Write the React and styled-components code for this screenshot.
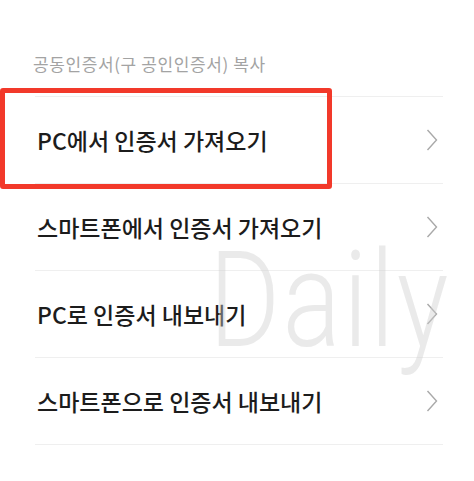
import React from 'react'
import styled, { createGlobalStyle } from 'styled-components'

const GlobalStyle = createGlobalStyle`
  body {
    margin: 0;
    background: #ffffff;
    font-family: "Noto Sans CJK KR", "Noto Sans", sans-serif;
  }
`

const items = [
  { label: 'PC에서 인증서 가져오기', marked: true },
  { label: '스마트폰에서 인증서 가져오기' },
  { label: 'PC로 인증서 내보내기' },
  { label: '스마트폰으로 인증서 내보내기' },
]

function Chevron() {
  return (
    <svg width="12" height="24" viewBox="0 0 12 24">
      <polyline points="1.5,2 10.5,12 1.5,22" fill="none" stroke="#a9a9a9" strokeWidth="1.4" />
    </svg>
  )
}

export default function App() {
  return (
    <Page>
      <GlobalStyle />
      <SectionTitle>공동인증서(구 공인인증서) 복사</SectionTitle>
      <List>
        {items.map((item) => (
          <Row key={item.label}>
            {item.marked && <Highlight />}
            <Label>{item.label}</Label>
            <Chevron />
          </Row>
        ))}
      </List>
      <Watermark>Daily</Watermark>
    </Page>
  )
}

const Page = styled.div`
  position: relative;
  width: 474px;
  height: 481px;
  padding: 52px 31px 0 33px;
  box-sizing: border-box;
  overflow: hidden;
`

const SectionTitle = styled.div`
  font-size: 17px;
  line-height: 24px;
  color: #a3a3a3;
  letter-spacing: 0.6px;
  height: 44px;
`

const List = styled.div`
  margin-left: 2px;
  border-top: 1px solid #efefef;
`

const Row = styled.div`
  position: relative;
  display: flex;
  align-items: center;
  justify-content: space-between;
  height: 86px;
  padding: 0 5px 0 2px;
  border-bottom: 1px solid #efefef;
`

const Label = styled.span`
  font-size: 23px;
  font-weight: 500;
  color: #1c1c1c;
  letter-spacing: 0;
`

const Highlight = styled.div`
  position: absolute;
  left: -35px;
  top: -9px;
  width: 332px;
  height: 101px;
  box-sizing: border-box;
  border: 5px solid #f2392a;
  border-radius: 3px;
  pointer-events: none;
`

const Watermark = styled.div`
  position: absolute;
  left: 209px;
  top: 234px;
  font-family: Roboto, "DejaVu Sans", sans-serif;
  font-size: 134px;
  font-weight: 300;
  line-height: 1;
  letter-spacing: 3px;
  color: rgba(205, 205, 205, 0.42);
  transform: scaleX(0.81);
  transform-origin: left top;
  pointer-events: none;
`
